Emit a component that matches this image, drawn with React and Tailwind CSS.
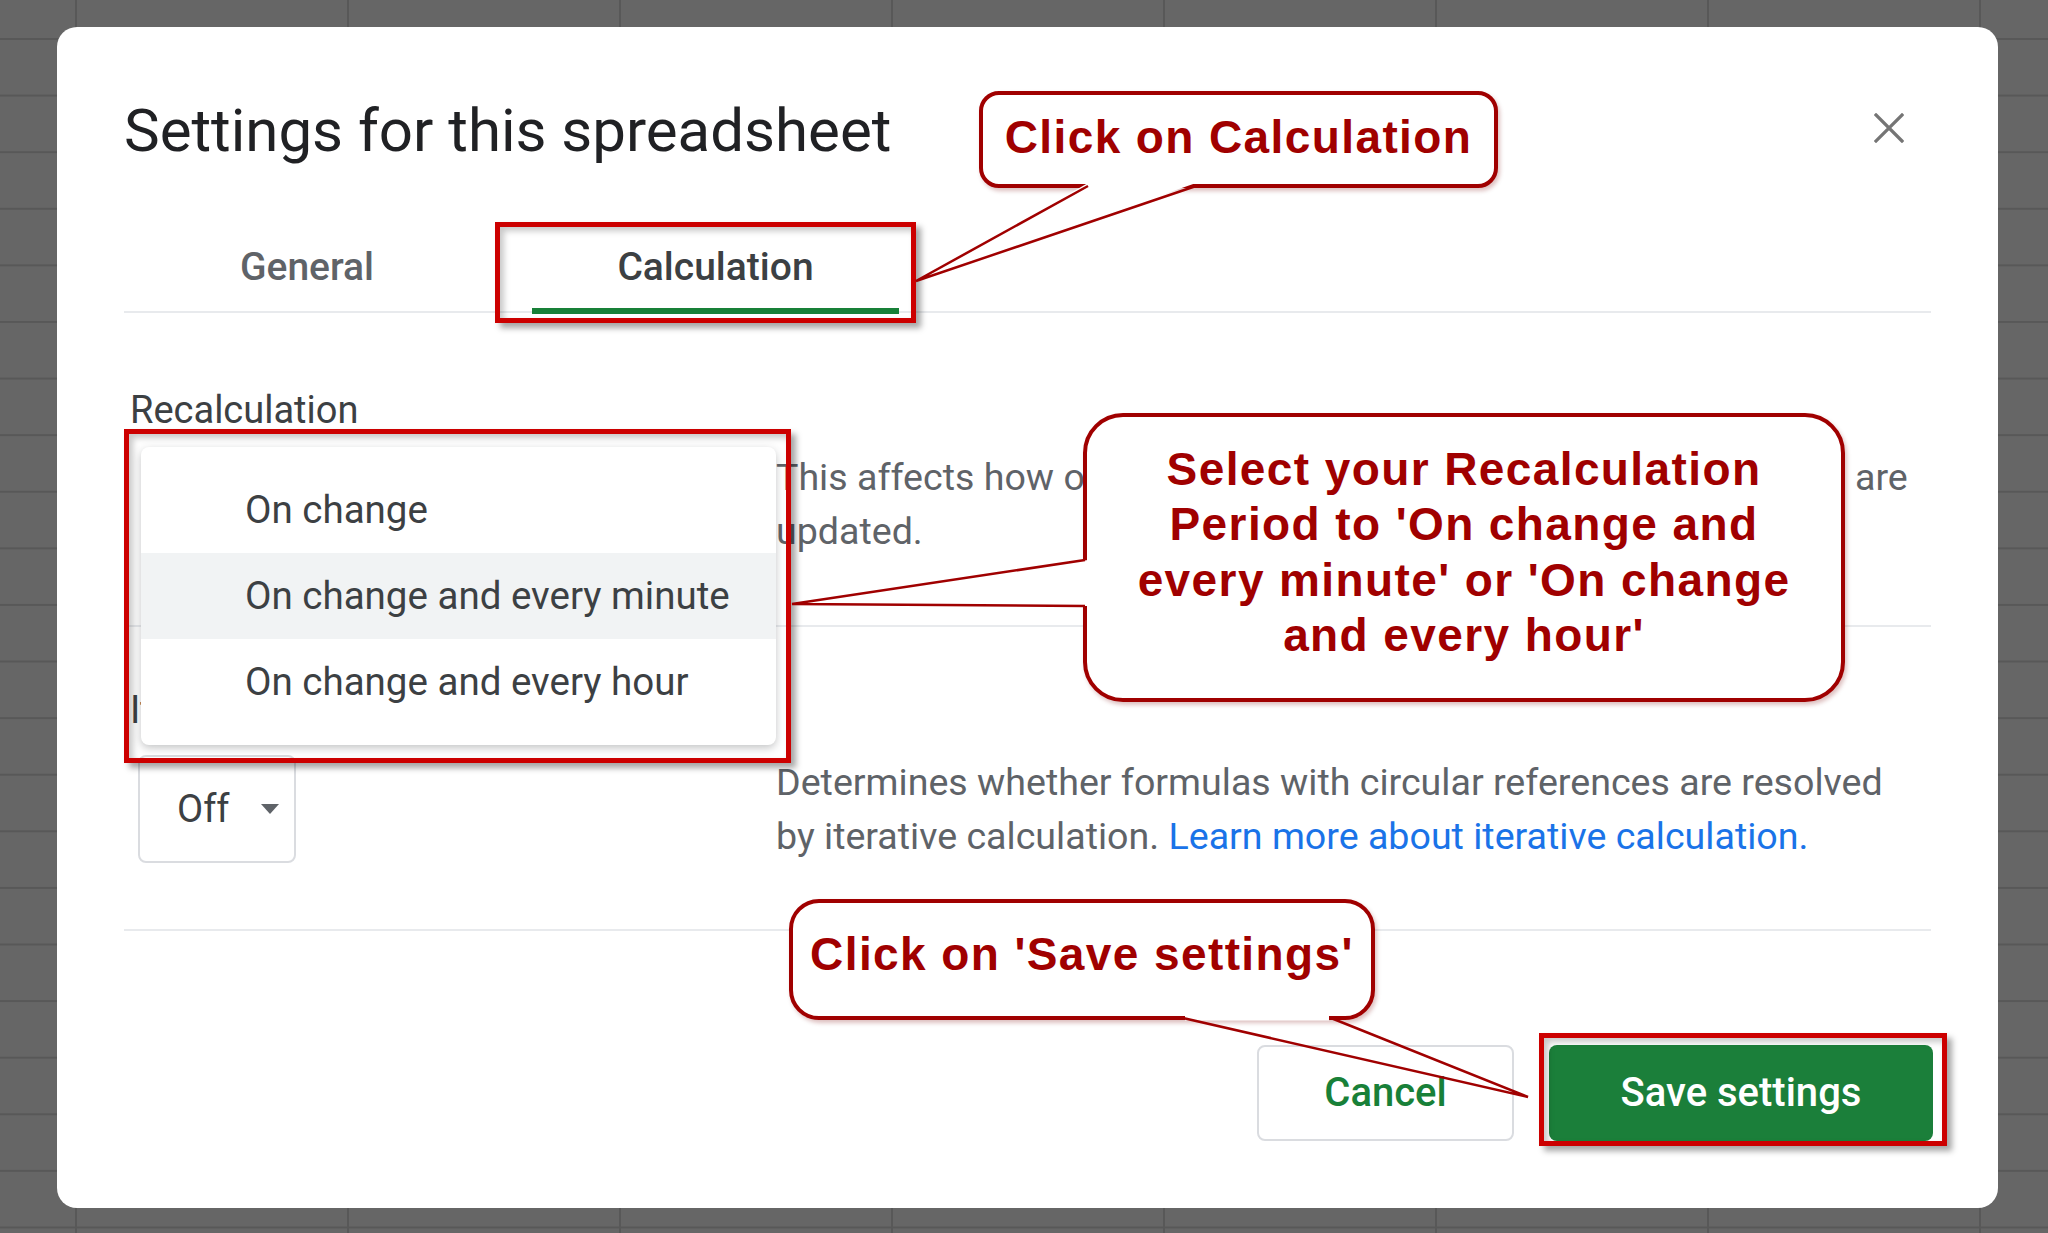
import React from 'react';

const redBox =
  'absolute border-[5px] border-[#cc0000] shadow-[5px_5px_6px_rgba(0,0,0,0.35),inset_4px_4px_6px_rgba(0,0,0,0.22)]';
const callout =
  "absolute bg-white border-[4px] border-[#a00000] shadow-[2px_3px_4px_rgba(120,0,0,0.25)] flex items-center justify-center text-center font-['Liberation_Sans',Arial,sans-serif] font-bold text-[46px] tracking-[1.4px] text-[#a00000]";

const menuItems = ['On change', 'On change and every minute', 'On change and every hour'];

const App = () => {
  return (
    <div className="w-[2048px] h-[1233px] overflow-hidden bg-[#666666] [background-image:linear-gradient(to_right,#585858_2px,transparent_2px),linear-gradient(to_bottom,#585858_2px,transparent_2px)] [background-size:272px_56.6px] [background-position:75px_38px] pt-[27px] pl-[57px] font-['Roboto','Liberation_Sans',sans-serif]">
      <div className="relative w-[1941px] h-[1181px] bg-white rounded-[20px] pt-[68px] px-[67px]">
        {/* header */}
        <div className="flex items-center justify-between">
          <h1 className="text-[60px] leading-[72px] text-[#202124] font-normal">Settings for this spreadsheet</h1>
          <button className="mr-[27px] mb-[6px] w-[30px] h-[30px] flex items-center justify-center">
            <svg width="30" height="30" viewBox="0 0 30 30">
              <path d="M2 2 L28 28 M28 2 L2 28" stroke="#757575" strokeWidth="3.2" strokeLinecap="square" />
            </svg>
          </button>
        </div>

        {/* tabs */}
        <div className="mt-[76px] flex gap-[42px] border-b-2 border-[#e8eaed]">
          <div className="w-[366px] -mb-[3px] flex flex-col items-center">
            <span className="text-[39px] leading-[48px] font-medium text-[#5f6368]">General</span>
            <div className="mt-[17px] h-[6px] w-full" />
          </div>
          <div className="w-[367px] -mb-[3px] flex flex-col items-center">
            <span className="text-[39px] leading-[48px] font-medium text-[#3c4043]">Calculation</span>
            <div className="mt-[17px] h-[6px] w-full bg-[#188038]" />
          </div>
        </div>

        {/* recalculation */}
        <div className="mt-[74px] pl-[6px] text-[38px] leading-[46px] text-[#3c4043]">Recalculation</div>
        <div className="mt-[17px] grid grid-cols-[652px_1fr]">
          <div className="pl-[14px]">
            <div className="w-[420px] h-[108px]" />
          </div>
          <p className="text-[37.6px] leading-[54px] text-[#5f6368] whitespace-nowrap">
            This affects how often NOW, TODAY, RAND, and RANDBETWEEN are
            <br />
            updated.
          </p>
        </div>

        <div className="mt-[67px] h-[2px] bg-[#e8eaed]" />

        {/* iterative calculation */}
        <div className="mt-[60px] pl-[6px] text-[38px] leading-[46px] text-[#3c4043]">Iterative calculation</div>
        <div className="mt-[22px] grid grid-cols-[652px_1fr]">
          <div className="pl-[14px]">
            <div className="w-[158px] h-[108px] border-2 border-[#dadce0] rounded-[8px] flex items-center pl-[37px]">
              <span className="text-[38px] leading-[46px] text-[#3c4043]">Off</span>
              <svg className="ml-[31px]" width="18" height="10" viewBox="0 0 18 10">
                <path d="M0 0 H18 L9 10 Z" fill="#5f6368" />
              </svg>
            </div>
          </div>
          <p className="text-[37.6px] leading-[54px] text-[#5f6368] whitespace-nowrap">
            Determines whether formulas with circular references are resolved
            <br />
            by iterative calculation. <span className="text-[#1a73e8]">Learn more about iterative calculation.</span>
          </p>
        </div>

        <div className="mt-[66px] h-[2px] bg-[#e8eaed]" />

        {/* buttons */}
        <div className="mt-[114px] flex justify-end gap-[35px] -mr-[2px]">
          <button className="w-[257px] h-[96px] border-2 border-[#dadce0] rounded-[8px] bg-white text-[40px] font-medium text-[#188038]">
            Cancel
          </button>
          <button className="w-[384px] h-[96px] rounded-[8px] bg-[#1b7f3a] text-[40px] font-medium text-white">
            Save settings
          </button>
        </div>

        {/* open recalculation menu */}
        <div className="absolute left-[84px] top-[420px] w-[635px] h-[298px] bg-white rounded-[8px] py-[20px] shadow-[0_3px_8px_rgba(60,64,67,0.3)]">
          {menuItems.map((item, i) => (
            <div
              key={item}
              className={`h-[86px] flex items-center pl-[104px] whitespace-nowrap text-[38.5px] text-[#3c4043] ${i === 1 ? 'bg-[#f1f3f4]' : ''}`}
            >
              {item}
            </div>
          ))}
        </div>

        {/* highlight boxes */}
        <div className={`${redBox} left-[438px] top-[195px] w-[421px] h-[101px]`} />
        <div className={`${redBox} left-[67px] top-[402px] w-[667px] h-[334px]`} />
        <div className={`${redBox} left-[1482px] top-[1006px] w-[408px] h-[113px]`} />

        {/* callouts */}
        <div className={`${callout} left-[922px] top-[64px] w-[519px] h-[97px] rounded-[20px] pb-[4px]`}>
          Click on Calculation
        </div>
        <div className={`${callout} left-[1026px] top-[386px] w-[762px] h-[289px] rounded-[40px] leading-[55.5px] pb-[10px]`}>
          <span>
            Select your Recalculation
            <br />
            Period to 'On change and
            <br />
            every minute' or 'On change
            <br />
            and every hour'
          </span>
        </div>
        <div className={`${callout} left-[732px] top-[872px] w-[586px] h-[121px] rounded-[30px] pb-[10px]`}>
          Click on 'Save settings'
        </div>

        {/* callout tails */}
        <svg className="absolute left-0 top-0 pointer-events-none" width="1941" height="1181" viewBox="0 0 1941 1181">
          <polygon points="1031,156 859,254 1139,156" fill="#fff" />
          <polyline points="1031,159 859,254 1139,159" fill="none" stroke="#a00000" strokeWidth="2.5" />
          <polygon points="1031,533 735,577 1031,579" fill="#fff" />
          <polyline points="1028,533 735,577 1028,579" fill="none" stroke="#a00000" strokeWidth="2.5" />
          <line x1="1128" y1="991" x2="1272" y2="991" stroke="#fff" strokeWidth="5" />
          <polyline points="1126,991 1471,1070 1274,991" fill="none" stroke="#a00000" strokeWidth="2.5" />
        </svg>
      </div>
    </div>
  );
};

export default App;
